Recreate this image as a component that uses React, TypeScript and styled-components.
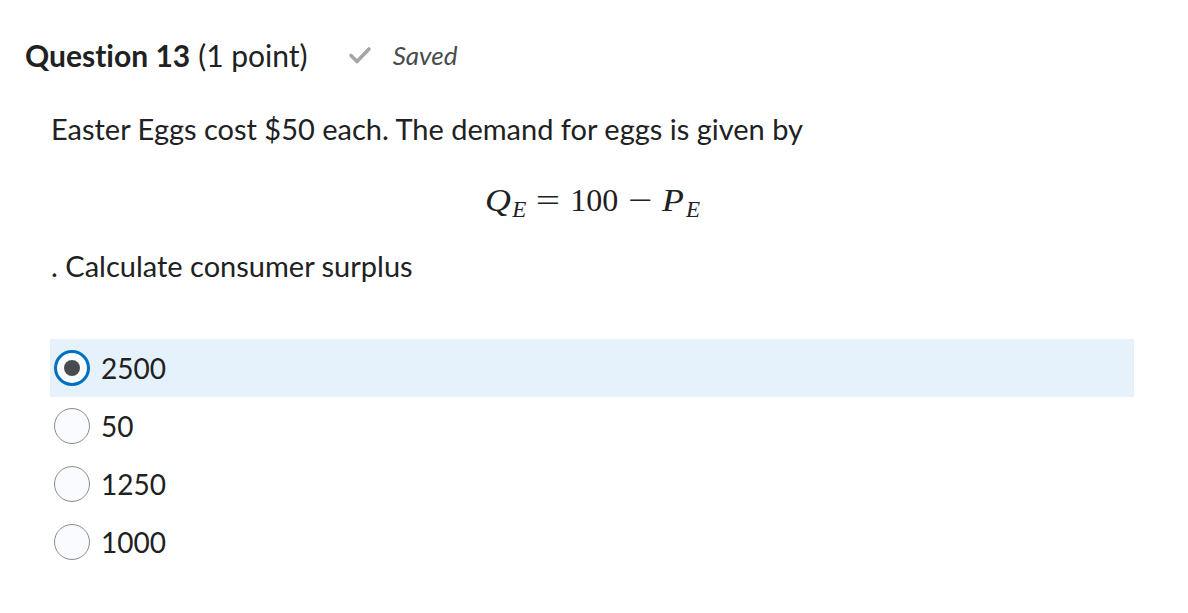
import React, { useState } from "react";
import styled, { createGlobalStyle } from "styled-components";

const Global = createGlobalStyle`
  html, body { margin: 0; padding: 0; background: #ffffff; }
  body {
    font-family: Lato, "Open Sans", sans-serif;
    color: #202122;
    font-variant-ligatures: none;
    font-feature-settings: "liga" 0, "clig" 0, "dlig" 0;
  }
`;

const Page = styled.div`
  padding: 37px 54px 40px 25px;
`;

const Header = styled.h2`
  display: flex;
  align-items: center;
  margin: 0;
  font-size: 30px;
  line-height: 36px;
  font-weight: 400;
  color: #202122;
  font-variant-ligatures: none;
  font-feature-settings: "liga" 0, "clig" 0, "dlig" 0;
`;

const Title = styled.span`
  font-weight: 700;
  margin-right: 8px;
`;

const Status = styled.span`
  display: inline-flex;
  align-items: center;
  margin-left: 39px;
  gap: 20px;
  font-size: 26px;
  font-style: italic;
  color: #494c4e;
`;

const Body = styled.div`
  margin-left: 26px;
`;

const Para = styled.p<{ $top: number }>`
  margin: ${(p) => p.$top}px 0 0 0;
  font-size: 29px;
  line-height: 40px;
`;

const MathBlock = styled.div`
  margin-top: 26px;
  height: 50px;
  line-height: 50px;
  text-align: center;
  font-family: "Liberation Serif", "Times New Roman", serif;
  font-size: 32px;
  color: #202122;
`;

const MathLine = styled.span`
  display: inline-block;
  white-space: nowrap;
`;

const MI = styled.span`
  font-style: italic;
  display: inline-block;
  transform: scaleX(1.12);
  transform-origin: left center;
  margin-right: 3px;
`;

const Sub = styled.span`
  font-style: italic;
  font-size: 23px;
  position: relative;
  top: 6px;
  margin-left: 1px;
`;

const Op = styled.span`
  display: inline-block;
  margin: 0 13px;
  transform: scaleX(1.35);
`;

const Options = styled.div`
  margin-top: 53px;
  margin-left: 25px;
  display: flex;
  flex-direction: column;
`;

const Row = styled.label<{ $selected: boolean }>`
  display: flex;
  align-items: center;
  height: 58px;
  padding-left: 4px;
  gap: 11px;
  background: ${(p) => (p.$selected ? "#e5f1fb" : "transparent")};
  font-size: 28px;
  cursor: pointer;
`;

const Radio = styled.span<{ $selected: boolean }>`
  box-sizing: border-box;
  width: 36px;
  height: 36px;
  border-radius: 50%;
  display: flex;
  align-items: center;
  justify-content: center;
  background: #f9fbff;
  border: ${(p) => (p.$selected ? "3px solid #006fbf" : "1.5px solid #868c8f")};
`;

const Dot = styled.span`
  width: 16px;
  height: 16px;
  border-radius: 50%;
  background: #494c4e;
`;

const options = ["2500", "50", "1250", "1000"];

export default function App() {
  const [sel, setSel] = useState(0);
  return (
    <>
      <Global />
      <Page>
        <Header>
          <Title>Question 13</Title>(1 point)
          <Status>
            <svg width="26" height="20" viewBox="0 0 26 20">
              <path d="M4 10.5 L10 16.5 L22 4" fill="none" stroke="#a2a6a9" strokeWidth="3.6" strokeLinecap="round" strokeLinejoin="round" />
            </svg>
            Saved
          </Status>
        </Header>
        <Body>
          <Para $top={36}>Easter Eggs cost $50 each. The demand for eggs is given by</Para>
          <MathBlock>
            <MathLine>
              <MI>Q</MI>
              <Sub>E</Sub>
              <Op>=</Op>
              <span>100</span>
              <Op>−</Op>
              <MI>P</MI>
              <Sub>E</Sub>
            </MathLine>
          </MathBlock>
          <Para $top={21}>. Calculate consumer surplus</Para>
        </Body>
        <Options>
          {options.map((o, i) => (
            <Row key={o} $selected={sel === i} onClick={() => setSel(i)}>
              <Radio $selected={sel === i}>{sel === i && <Dot />}</Radio>
              {o}
            </Row>
          ))}
        </Options>
      </Page>
    </>
  );
}
